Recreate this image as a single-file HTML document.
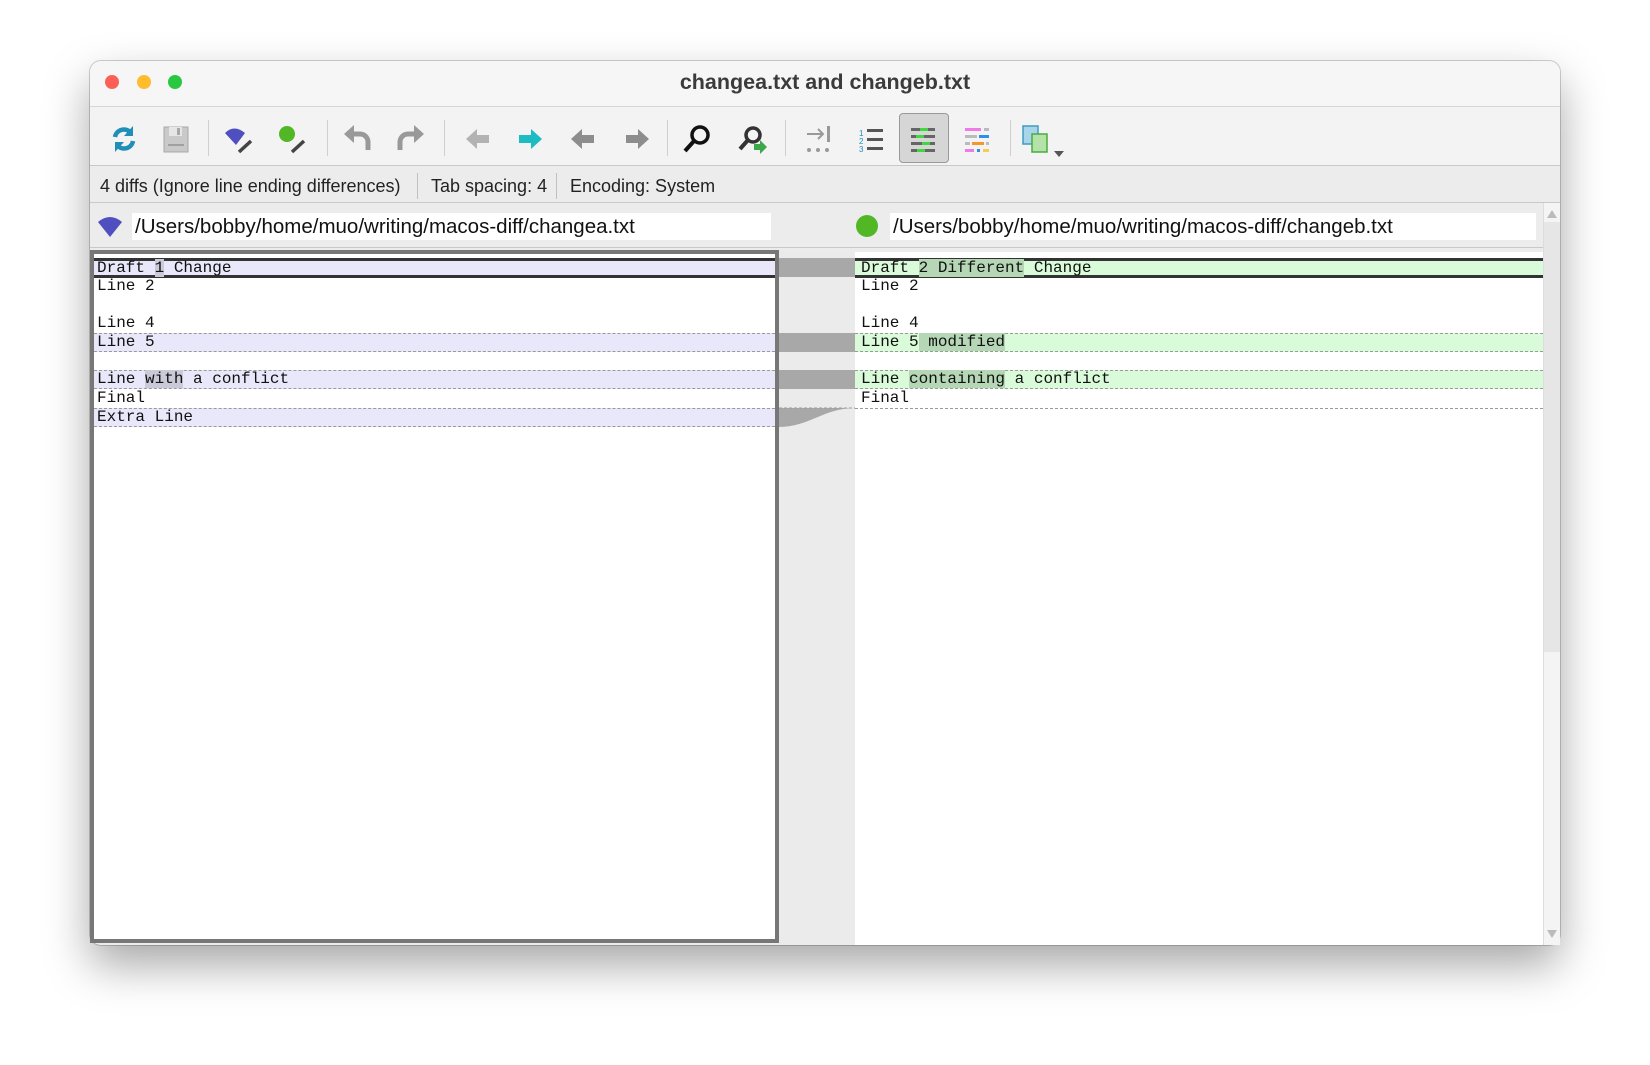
<!DOCTYPE html>
<html><head><meta charset="utf-8"><style>
*{margin:0;padding:0;box-sizing:border-box}
body{width:1650px;height:1065px;background:#fff;position:relative;overflow:hidden;font-family:"Liberation Sans",sans-serif}
.win{position:absolute;left:90px;top:61px;width:1470px;height:884px;border-radius:11px;background:#ececec;box-shadow:0 20px 45px rgba(0,0,0,.35),0 0 0 1px rgba(0,0,0,.18);overflow:hidden}
.abs{position:absolute}
.ic{position:absolute;top:122px;width:34px;height:34px}
.sep{position:absolute;top:120px;width:1px;height:36px;background:#cfcfcf}
.row{position:absolute;height:19px;font-family:"Liberation Mono",monospace;font-size:16px;line-height:19px;color:#111;white-space:pre;padding-left:3px}
.rr{padding-left:6px}
.hl{background:#e8e8fa;border-top:1px dashed #9a9a9a;border-bottom:1px dashed #9a9a9a;line-height:17px}
.hr{background:#d9fbd9;border-top:1px dashed #9a9a9a;border-bottom:1px dashed #9a9a9a;line-height:17px}
.il{background:#c9c9d7}.ir{background:#b5d7b5}
.st{position:absolute;top:176px;font-size:18px;color:#222;white-space:nowrap}
.pf{position:absolute;top:213px;height:27px;background:#fff;font-size:20.5px;line-height:27px;padding-left:3px;color:#111;white-space:nowrap}
</style></head><body>
<div class="win"></div>
<div class="abs" style="left:90px;top:61px;width:1470px;height:46px;background:#f6f6f6;border-radius:11px 11px 0 0;border-bottom:1px solid #d6d6d6"></div>
<div class="abs" style="left:105px;top:75px;width:14px;height:14px;border-radius:50%;background:#fe5f57"></div>
<div class="abs" style="left:137px;top:75px;width:14px;height:14px;border-radius:50%;background:#febc2e"></div>
<div class="abs" style="left:168px;top:75px;width:14px;height:14px;border-radius:50%;background:#28c840"></div>
<div class="abs" style="left:0;width:1650px;top:70px;text-align:center;font-size:21.5px;font-weight:bold;color:#3b3b3b">changea.txt and changeb.txt</div>
<div class="abs" style="left:90px;top:107px;width:1470px;height:59px;background:#f3f3f3;border-bottom:1px solid #c8c8c8"></div>
<svg class="ic" style="left:107px" viewBox="0 0 34 34"><path d="M8 15a9 9 0 0 1 16-4" stroke="#1f8fb8" stroke-width="4.5" fill="none"/><path d="M26 4v10h-9z" fill="#1f8fb8"/><path d="M26 19a9 9 0 0 1-16 4" stroke="#1f8fb8" stroke-width="4.5" fill="none"/><path d="M8 30V20h9z" fill="#1f8fb8"/></svg>
<svg class="ic" style="left:159px" viewBox="0 0 34 34"><rect x="5" y="5" width="24" height="25" fill="#c9c9c9" stroke="#a8a8a8"/><rect x="10" y="5" width="13" height="9" fill="#e6e6e6"/><rect x="18" y="6" width="3" height="7" fill="#a8a8a8"/><rect x="9" y="22" width="16" height="2" fill="#a0a0a0"/></svg>
<div class="sep" style="left:208px"></div>
<svg class="ic" style="left:222px" viewBox="0 0 34 34"><path d="M3 11q9-9 20 0l-9 12z" fill="#4f4fc0"/><path d="M17 30l12-11" stroke="#444" stroke-width="3.5"/></svg>
<svg class="ic" style="left:275px" viewBox="0 0 34 34"><circle cx="12" cy="12" r="8" fill="#52b724"/><path d="M17 30l12-11" stroke="#444" stroke-width="3.5"/></svg>
<div class="sep" style="left:327px"></div>
<svg class="ic" style="left:340px" viewBox="0 0 34 34"><path d="M12 12h8a8 8 0 0 1 8 8v8" stroke="#999" stroke-width="5" fill="none"/><path d="M4 12l10-9v18z" fill="#999"/></svg>
<svg class="ic" style="left:394px" viewBox="0 0 34 34"><path d="M22 12h-8a8 8 0 0 0-8 8v8" stroke="#999" stroke-width="5" fill="none"/><path d="M30 12l-10-9v18z" fill="#999"/></svg>
<div class="sep" style="left:444px"></div>
<svg class="ic" style="left:461px" viewBox="0 0 34 34"><path d="M5 17l11-10v6h12v8H16v6z" fill="#b3b3b3"/></svg>
<svg class="ic" style="left:513px" viewBox="0 0 34 34"><path d="M29 17L18 7v6H6v8h12v6z" fill="#1dbcc3"/></svg>
<svg class="ic" style="left:566px" viewBox="0 0 34 34"><path d="M5 17l11-10v6h12v8H16v6z" fill="#8d8d8d"/></svg>
<svg class="ic" style="left:620px" viewBox="0 0 34 34"><path d="M29 17L18 7v6H6v8h12v6z" fill="#8d8d8d"/></svg>
<div class="sep" style="left:667px"></div>
<svg class="ic" style="left:680px" viewBox="0 0 34 34"><circle cx="20" cy="13" r="8" stroke="#111" stroke-width="3.5" fill="none"/><path d="M14 19L5 29" stroke="#111" stroke-width="4"/></svg>
<svg class="ic" style="left:736px" viewBox="0 0 34 34"><circle cx="17" cy="13" r="7" stroke="#333" stroke-width="3.5" fill="none"/><path d="M12 18L4 27" stroke="#333" stroke-width="4"/><path d="M18 22l6 0 0-4 7 7-7 7 0-4-6 0z" fill="#3ca84a"/></svg>
<div class="sep" style="left:785px"></div>
<svg class="ic" style="left:801px" viewBox="0 0 34 34"><path d="M6 12h16M17 7l5 5-5 5" stroke="#999" stroke-width="2" fill="none"/><rect x="26" y="4" width="3" height="16" fill="#999"/><circle cx="8" cy="28" r="2" fill="#999"/><circle cx="17" cy="28" r="2" fill="#999"/><circle cx="26" cy="28" r="2" fill="#999"/></svg>
<svg class="ic" style="left:854px" viewBox="0 0 34 34"><text x="5" y="14" font-size="8" fill="#1f8fb8" font-family="Liberation Sans">1</text><text x="5" y="22" font-size="8" fill="#1f8fb8" font-family="Liberation Sans">2</text><text x="5" y="30" font-size="8" fill="#1f8fb8" font-family="Liberation Sans">3</text><rect x="13" y="7" width="16" height="3" fill="#555"/><rect x="13" y="16" width="16" height="3" fill="#555"/><rect x="13" y="25" width="16" height="3" fill="#555"/></svg>
<div class="abs" style="left:899px;top:113px;width:50px;height:50px;border:1px solid #9a9a9a;border-radius:4px;background:#d6d6d6"></div>
<svg class="ic" style="left:906px" viewBox="0 0 34 34"><g fill="#666"><rect x="5" y="6" width="24" height="3"/><rect x="5" y="13" width="24" height="3"/><rect x="5" y="20" width="24" height="3"/><rect x="5" y="27" width="24" height="3"/></g><g fill="#3fd83f"><rect x="14" y="6" width="8" height="3"/><rect x="10" y="13" width="8" height="3"/><rect x="16" y="20" width="8" height="3"/><rect x="11" y="27" width="8" height="3"/></g></svg>
<svg class="ic" style="left:960px" viewBox="0 0 34 34"><rect x="5" y="6" width="16" height="3" fill="#f07be6"/><rect x="24" y="6" width="5" height="3" fill="#bbb"/><rect x="5" y="13" width="12" height="3" fill="#bbb"/><rect x="19" y="13" width="10" height="3" fill="#2f8fe8"/><rect x="5" y="20" width="5" height="3" fill="#bbb"/><rect x="12" y="20" width="12" height="3" fill="#f7962a"/><rect x="26" y="20" width="3" height="3" fill="#bbb"/><rect x="5" y="27" width="9" height="3" fill="#f07be6"/><rect x="17" y="27" width="3" height="3" fill="#2f8fe8"/><rect x="23" y="27" width="6" height="3" fill="#f7ce4a"/></svg>
<div class="sep" style="left:1010px"></div>
<svg class="ic" style="left:1019px" viewBox="0 0 34 34"><rect x="4" y="4" width="15" height="18" fill="#a9d5ea" stroke="#3e9cc2" stroke-width="1.5"/><rect x="13" y="12" width="15" height="18" fill="#b5e2a8" stroke="#4aab3e" stroke-width="1.5"/></svg>
<svg class="abs" style="left:1054px;top:151px" width="10" height="6"><path d="M0 0h10L5 6z" fill="#555"/></svg>
<div class="abs" style="left:90px;top:166px;width:1470px;height:37px;background:#ececec;border-bottom:1px solid #c8c8c8"></div>
<div class="st" style="left:100px">4 diffs (Ignore line ending differences)</div>
<div class="abs" style="left:417px;top:173px;width:1px;height:26px;background:#c0c0c0"></div>
<div class="st" style="left:431px">Tab spacing: 4</div>
<div class="abs" style="left:556px;top:173px;width:1px;height:26px;background:#c0c0c0"></div>
<div class="st" style="left:570px">Encoding: System</div>
<div class="abs" style="left:90px;top:203px;width:1453px;height:45px;background:#ececec;border-bottom:1px solid #c8c8c8"></div>
<svg class="abs" style="left:97px;top:216px" width="26" height="22"><path d="M1 6q12-10 24 0l-12 15z" fill="#4f4fc0"/></svg>
<div class="pf" style="left:132px;width:639px">/Users/bobby/home/muo/writing/macos-diff/changea.txt</div>
<div class="abs" style="left:856px;top:215px;width:22px;height:22px;border-radius:50%;background:#52b724"></div>
<div class="pf" style="left:890px;width:646px">/Users/bobby/home/muo/writing/macos-diff/changeb.txt</div>
<div class="abs" style="left:90px;top:250px;width:689px;height:693px;background:#fff;border:4px solid #777"></div>
<div class="abs" style="left:779px;top:250px;width:76px;height:695px;background:#ebebeb"></div>
<div class="abs" style="left:855px;top:252px;width:688px;height:693px;background:#fff"></div>
<div class="abs" style="left:1543px;top:203px;width:17px;height:742px;background:#f4f4f4;border-left:1px solid #ddd"></div>
<div class="abs" style="left:1544px;top:222px;width:16px;height:430px;background:#e6e6e6"></div>
<svg class="abs" style="left:1547px;top:210px" width="10" height="8"><path d="M0 8h10L5 0z" fill="#bbb"/></svg>
<svg class="abs" style="left:1547px;top:930px" width="10" height="8"><path d="M0 0h10L5 8z" fill="#bbb"/></svg>
<svg class="abs" style="left:779px;top:250px" width="76" height="200">
<rect x="0" y="8" width="76" height="19" fill="#a8a8a8"/>
<rect x="0" y="83" width="76" height="19" fill="#a8a8a8"/>
<rect x="0" y="120" width="76" height="19" fill="#a8a8a8"/>
<path d="M0 158 C30 158 45 158 76 158 L76 158 C45 158 30 177 0 177Z" fill="#a8a8a8"/>
<path d="M0 158 C30 158 45 158 76 158" stroke="#999" stroke-dasharray="3 2" fill="none"/>
</svg>
<div class="row hl" style="left:94px;top:258px;width:681px;border-top:3px solid #333;border-bottom:3px solid #333;height:20px;line-height:15px">Draft <span class="il">1</span> Change</div>
<div class="row" style="left:94px;top:277px">Line 2</div>
<div class="row" style="left:94px;top:314px">Line 4</div>
<div class="row hl" style="left:94px;top:333px;width:681px">Line 5</div>
<div class="row" style="left:94px;top:352px;width:681px;border-bottom:1px dashed #9a9a9a;height:19px"></div>
<div class="row hl" style="left:94px;top:370px;width:681px">Line <span class="il">with</span> a conflict</div>
<div class="row" style="left:94px;top:389px">Final</div>
<div class="row hl" style="left:94px;top:408px;width:681px">Extra Line</div>
<div class="row rr hr" style="left:855px;top:258px;width:688px;border-top:3px solid #333;border-bottom:3px solid #333;height:20px;line-height:15px">Draft <span class="ir">2 Different</span> Change</div>
<div class="row rr" style="left:855px;top:277px">Line 2</div>
<div class="row rr" style="left:855px;top:314px">Line 4</div>
<div class="row rr hr" style="left:855px;top:333px;width:688px">Line 5<span class="ir"> modified</span></div>
<div class="row rr" style="left:855px;top:352px;width:688px;border-bottom:1px dashed #9a9a9a;height:19px"></div>
<div class="row rr hr" style="left:855px;top:370px;width:688px">Line <span class="ir">containing</span> a conflict</div>
<div class="row rr" style="left:855px;top:389px;width:688px;border-bottom:1px dashed #9a9a9a;height:20px">Final</div>
</body></html>
